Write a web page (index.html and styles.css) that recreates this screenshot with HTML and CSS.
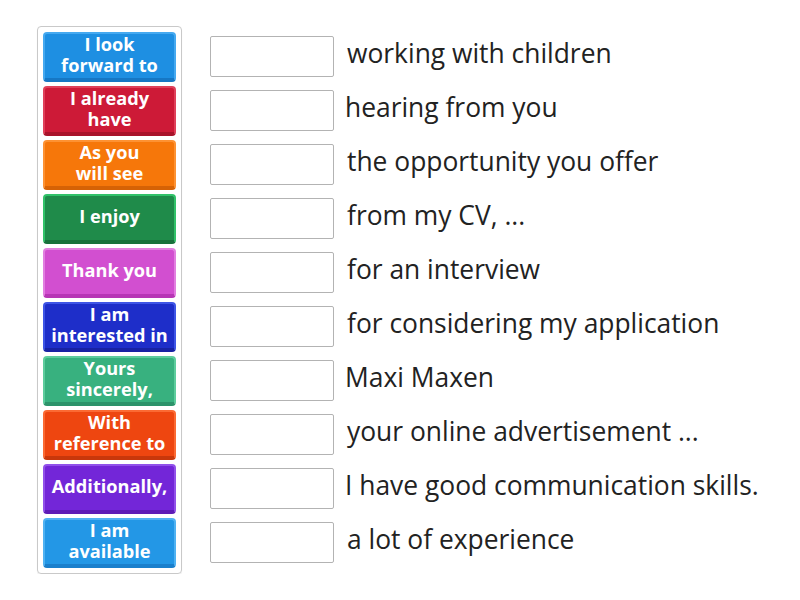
FILE: index.html
```html
<!DOCTYPE html>
<html lang="en">
<head>
<meta charset="utf-8">
<title>Match up</title>
<link rel="stylesheet" href="styles.css">
</head>
<body>
<div class="board">
  <div class="bank">
    <div class="tile blue"><span>I look<br>forward to</span></div>
    <div class="tile red"><span>I already<br>have</span></div>
    <div class="tile orange"><span>As you<br>will see</span></div>
    <div class="tile green"><span>I enjoy</span></div>
    <div class="tile pink"><span>Thank you</span></div>
    <div class="tile navy"><span>I am<br>interested in</span></div>
    <div class="tile teal"><span>Yours<br>sincerely,</span></div>
    <div class="tile vermilion"><span>With<br>reference to</span></div>
    <div class="tile purple"><span>Additionally,</span></div>
    <div class="tile sky"><span>I am<br>available</span></div>
  </div>
  <div class="answers">
    <div class="row"><div class="slot"></div><div class="phrase">working with children</div></div>
    <div class="row"><div class="slot"></div><div class="phrase near">hearing from you</div></div>
    <div class="row"><div class="slot"></div><div class="phrase">the opportunity you offer</div></div>
    <div class="row"><div class="slot"></div><div class="phrase">from my CV, ...</div></div>
    <div class="row"><div class="slot"></div><div class="phrase">for an interview</div></div>
    <div class="row"><div class="slot"></div><div class="phrase">for considering my application</div></div>
    <div class="row"><div class="slot"></div><div class="phrase near">Maxi Maxen</div></div>
    <div class="row"><div class="slot"></div><div class="phrase">your online advertisement ...</div></div>
    <div class="row"><div class="slot"></div><div class="phrase near">I have good communication skills.</div></div>
    <div class="row"><div class="slot"></div><div class="phrase">a lot of experience</div></div>
  </div>
</div>
</body>
</html>
```

FILE: styles.css
```css
html, body {
  margin: 0;
  padding: 0;
  background: #ffffff;
}

body {
  font-family: "Open Sans", "Noto Sans", sans-serif;
  color: #222222;
}

.board {
  display: flex;
  align-items: flex-start;
  padding: 26px 0 0 37px;
}

.bank {
  display: flex;
  flex-direction: column;
  gap: 4px;
  padding: 5px;
  border: 1px solid #c9c9c9;
  border-radius: 4px;
  box-shadow: 0 1px 1px rgba(0, 0, 0, 0.08);
}

.tile {
  box-sizing: border-box;
  width: 133px;
  height: 50px;
  border-radius: 4px;
  border: 2px solid;
  border-bottom-width: 4px;
  display: flex;
  align-items: center;
  justify-content: center;
  text-align: center;
  color: #ffffff;
  font-weight: 700;
  font-size: 18.2px;
  line-height: 21px;
  padding: 0 1px 3px;
  white-space: nowrap;
}

.tile span {
  display: block;
}

.blue      { background: #1e8fe2; border-color: #45a9f0; border-bottom-color: #1677c4; }
.red       { background: #cd1a37; border-color: #e0405a; border-bottom-color: #a9132b; }
.orange    { background: #f6770a; border-color: #fd9233; border-bottom-color: #d66205; }
.green     { background: #1f8b4a; border-color: #31c269; border-bottom-color: #18703b; }
.pink      { background: #d24fd0; border-color: #e27fe0; border-bottom-color: #b735b5; }
.navy      { background: #1e2ec9; border-color: #3e55e6; border-bottom-color: #1822a3; }
.teal      { background: #38b17f; border-color: #5dcd9d; border-bottom-color: #2c936a; }
.vermilion { background: #ee4610; border-color: #fb6a33; border-bottom-color: #c8370b; }
.purple    { background: #7326d8; border-color: #9251ea; border-bottom-color: #5e1bb6; }
.sky       { background: #2397e6; border-color: #4fb2f2; border-bottom-color: #1a7fcc; }

.answers {
  display: flex;
  flex-direction: column;
  gap: 13px;
  padding: 10px 0 0 28px;
}

.row {
  display: flex;
  align-items: center;
  height: 41px;
}

.slot {
  box-sizing: border-box;
  width: 124px;
  height: 41px;
  border: 1px solid #b3b3b3;
  border-radius: 2px;
  background: #ffffff;
  flex: none;
}

.phrase {
  margin-left: 13px;
  font-size: 26.4px;
  line-height: 32px;
  margin-top: -8px;
  white-space: nowrap;
  color: #222222;
}

.phrase.near {
  margin-left: 11px;
}
```
